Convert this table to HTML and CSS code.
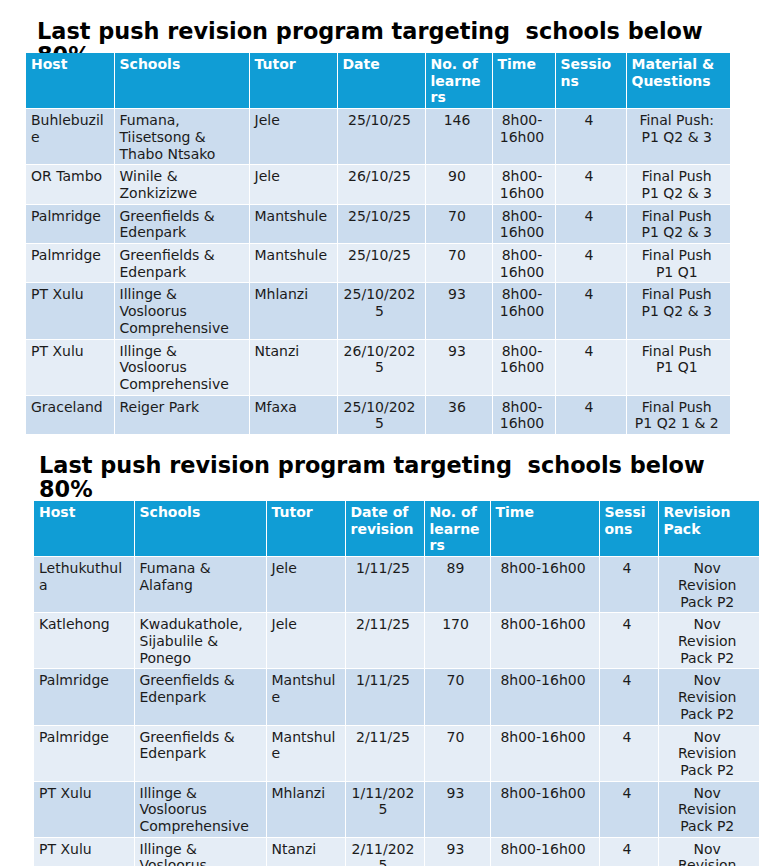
FILE: index.html
```html
<!DOCTYPE html>
<html>
<head>
<meta charset="utf-8">
<link rel="stylesheet" href="styles.css">
</head>
<body>
<section class="slide slide-one">
  <h1 class="title">Last push revision program targeting&nbsp; schools below 80%</h1>
  <table class="grid">
    <colgroup>
      <col class="w88"><col class="w135"><col class="w88"><col class="w88"><col class="w67"><col class="w63"><col class="w71"><col class="w104">
    </colgroup>
    <thead>
      <tr><th>Host</th><th>Schools</th><th>Tutor</th><th>Date</th><th>No. of learners</th><th>Time</th><th>Sessions</th><th>Material &amp; Questions</th></tr>
    </thead>
    <tbody>
      <tr class="b1"><td>Buhlebuzile</td><td>Fumana, Tiisetsong &amp; Thabo Ntsako</td><td>Jele</td><td class="c">25/10/25</td><td class="c">146</td><td class="c">8h00-16h00</td><td class="c">4</td><td class="c">Final Push: P1 Q2 &amp; 3</td></tr>
      <tr class="b2"><td>OR Tambo</td><td>Winile &amp; Zonkizizwe</td><td>Jele</td><td class="c">26/10/25</td><td class="c">90</td><td class="c">8h00-16h00</td><td class="c">4</td><td class="c">Final Push P1 Q2 &amp; 3</td></tr>
      <tr class="b1"><td>Palmridge</td><td>Greenfields &amp; Edenpark</td><td>Mantshule</td><td class="c">25/10/25</td><td class="c">70</td><td class="c">8h00-16h00</td><td class="c">4</td><td class="c">Final Push P1 Q2 &amp; 3</td></tr>
      <tr class="b2"><td>Palmridge</td><td>Greenfields &amp; Edenpark</td><td>Mantshule</td><td class="c">25/10/25</td><td class="c">70</td><td class="c">8h00-16h00</td><td class="c">4</td><td class="c">Final Push P1 Q1</td></tr>
      <tr class="b1"><td>PT Xulu</td><td>Illinge &amp; Vosloorus Comprehensive</td><td>Mhlanzi</td><td class="c">25/10/2025</td><td class="c">93</td><td class="c">8h00-16h00</td><td class="c">4</td><td class="c">Final Push P1 Q2 &amp; 3</td></tr>
      <tr class="b2"><td>PT Xulu</td><td>Illinge &amp; Vosloorus Comprehensive</td><td>Ntanzi</td><td class="c">26/10/2025</td><td class="c">93</td><td class="c">8h00-16h00</td><td class="c">4</td><td class="c">Final Push P1 Q1</td></tr>
      <tr class="b1"><td>Graceland</td><td>Reiger Park</td><td>Mfaxa</td><td class="c">25/10/2025</td><td class="c">36</td><td class="c">8h00-16h00</td><td class="c">4</td><td class="c">Final Push P1 Q2 1 &amp; 2</td></tr>
    </tbody>
  </table>
</section>
<section class="slide slide-two">
  <h1 class="title">Last push revision program targeting&nbsp; schools below 80%</h1>
  <table class="grid">
    <colgroup>
      <col class="w100"><col class="w132"><col class="w79"><col class="w79"><col class="w66"><col class="w109"><col class="w59"><col class="w101">
    </colgroup>
    <thead>
      <tr><th>Host</th><th>Schools</th><th>Tutor</th><th>Date of revision</th><th>No. of learners</th><th>Time</th><th>Sessions</th><th>Revision Pack</th></tr>
    </thead>
    <tbody>
      <tr class="b1"><td>Lethukuthula</td><td>Fumana &amp; Alafang</td><td>Jele</td><td class="c">1/11/25</td><td class="c">89</td><td class="c">8h00-16h00</td><td class="c">4</td><td class="c">Nov Revision Pack P2</td></tr>
      <tr class="b2"><td>Katlehong</td><td>Kwadukathole, Sijabulile &amp; Ponego</td><td>Jele</td><td class="c">2/11/25</td><td class="c">170</td><td class="c">8h00-16h00</td><td class="c">4</td><td class="c">Nov Revision Pack P2</td></tr>
      <tr class="b1"><td>Palmridge</td><td>Greenfields &amp; Edenpark</td><td>Mantshule</td><td class="c">1/11/25</td><td class="c">70</td><td class="c">8h00-16h00</td><td class="c">4</td><td class="c">Nov Revision Pack P2</td></tr>
      <tr class="b2"><td>Palmridge</td><td>Greenfields &amp; Edenpark</td><td>Mantshule</td><td class="c">2/11/25</td><td class="c">70</td><td class="c">8h00-16h00</td><td class="c">4</td><td class="c">Nov Revision Pack P2</td></tr>
      <tr class="b1"><td>PT Xulu</td><td>Illinge &amp; Vosloorus Comprehensive</td><td>Mhlanzi</td><td class="c">1/11/2025</td><td class="c">93</td><td class="c">8h00-16h00</td><td class="c">4</td><td class="c">Nov Revision Pack P2</td></tr>
      <tr class="b2"><td>PT Xulu</td><td>Illinge &amp; Vosloorus Comprehensive</td><td>Ntanzi</td><td class="c">2/11/2025</td><td class="c">93</td><td class="c">8h00-16h00</td><td class="c">4</td><td class="c">Nov Revision Pack P2</td></tr>
    </tbody>
  </table>
</section>
</body>
</html>
```
FILE: styles.css
```css
html, body {
  margin: 0;
  padding: 0;
  background: #ffffff;
}
body {
  font-family: "DejaVu Sans", "Liberation Sans", sans-serif;
  color: #1b1b1b;
}
.slide {
  display: flex;
  flex-direction: column;
}
.title {
  margin: 0;
  font-size: 22.4px;
  font-weight: bold;
  line-height: 24px;
  color: #000000;
}
.slide-one {
  padding-left: 26px;
}
.slide-one .title {
  margin-top: 19px;
  height: 34px;
  padding-left: 11px;
  width: 680px;
}
.slide-two {
  padding-left: 34px;
  margin-top: 19px;
}
.slide-two .title {
  height: 48px;
  padding-left: 5px;
  width: 680px;
}
.grid {
  position: relative;
  border-collapse: collapse;
  border-style: hidden;
  table-layout: fixed;
  font-size: 14px;
  line-height: 16.7px;
}
.slide-one .grid { width: 704px; }
.slide-two .grid { width: 725px; }
.grid th, .grid td {
  border: 1px solid #ffffff;
  padding: 3px 8px 2px 5px;
  vertical-align: top;
  text-align: left;
  overflow-wrap: anywhere;
}
.grid th {
  background: #109dd5;
  color: #ffffff;
  font-weight: bold;
}
.grid td.c { text-align: center; }
.grid tr.b1 td { background: #cbdcee; }
.grid tr.b2 td { background: #e5edf6; }
.w88 { width: 88px; }
.w135 { width: 135px; }
.w67 { width: 67px; }
.w63 { width: 63px; }
.w71 { width: 71px; }
.w104 { width: 104px; }
.w100 { width: 100px; }
.w132 { width: 132px; }
.w79 { width: 79px; }
.w66 { width: 66px; }
.w109 { width: 109px; }
.w59 { width: 59px; }
.w101 { width: 101px; }
```
